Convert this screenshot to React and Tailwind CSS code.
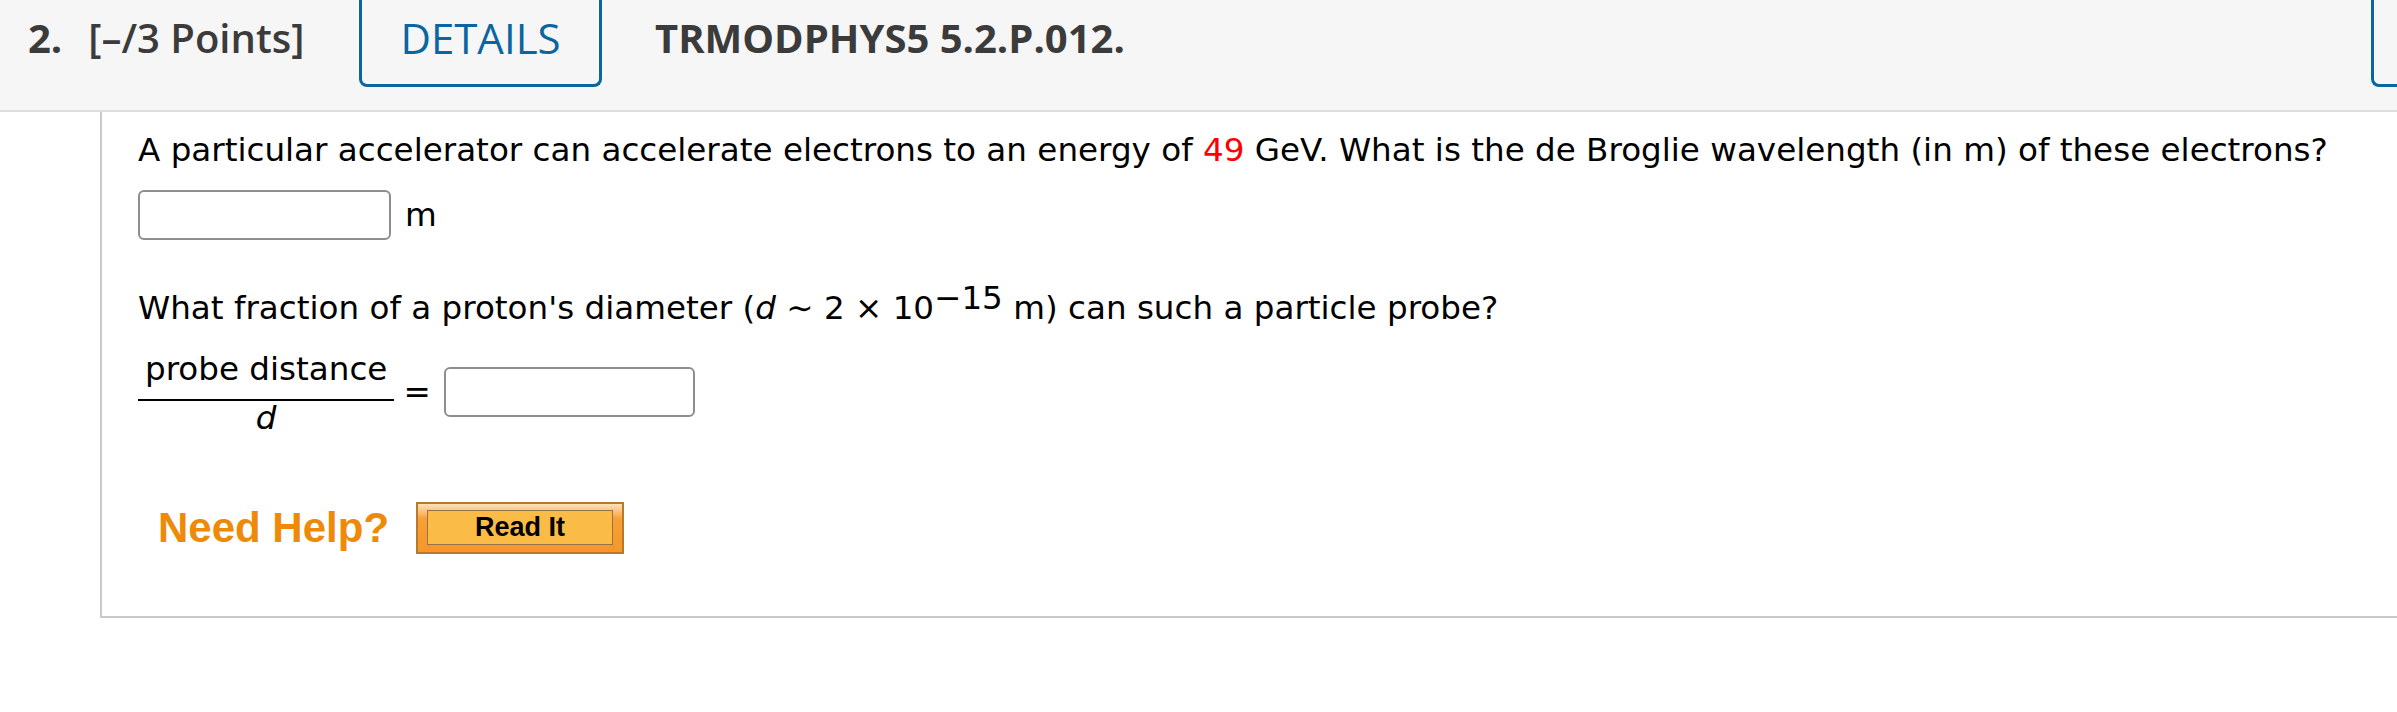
export default function App() {
  return (
    <div className="w-[2397px] h-[712px] bg-white overflow-hidden">
      {/* Header */}
      <div className="flex h-[112px] bg-[#f6f6f6] border-b-2 border-[#dddddd] font-['Open_Sans',sans-serif] text-[40px] leading-[75px] text-[#3b3b3b]">
        <div className="w-[359px] flex whitespace-nowrap">
          <span className="ml-[28px] font-bold">2.</span>
          <span className="ml-[26px] font-semibold">[–/3 Points]</span>
        </div>
        <div className="w-[243px] h-[87px] border-x-[3px] border-b-[3px] border-[#0b66a0] rounded-b-[8px] text-center text-[42px] text-[#0b65a0]">
          DETAILS
        </div>
        <div className="ml-[53px] font-bold whitespace-nowrap">TRMODPHYS5 5.2.P.012.</div>
        <div className="ml-auto w-[26px] h-[87px] border-l-[3px] border-b-[3px] rounded-bl-[8px] border-[#0b66a0]" />
      </div>

      {/* Content */}
      <div className="ml-[100px] h-[506px] border-l-2 border-b-2 border-[#c9c9c9] pl-[36px] pt-[16px] font-['DejaVu_Sans',sans-serif] text-[32.6px] leading-[44px] text-black">
        <p className="whitespace-nowrap">
          A particular accelerator can accelerate electrons to an energy of{" "}
          <span className="text-[#ff0000]">49</span> GeV. What is the de Broglie wavelength (in m) of these electrons?
        </p>
        <div className="mt-[18px] flex items-center">
          <div className="w-[253px] h-[50px] border-2 border-[#8e8e8e] rounded-[6px] bg-white" />
          <span className="ml-[14px]">m</span>
        </div>
        <p className="mt-[46px] whitespace-nowrap">
          What fraction of a proton's diameter (<i>d</i> ∼ 2 × 10
          <span className="relative -top-[10px]">−15</span> m) can such a particle probe?
        </p>
        <div className="mt-[19px] flex items-center">
          <div className="flex flex-col items-stretch">
            <div className="px-[7px] pb-[10px] leading-[40px] text-center">probe distance</div>
            <div className="h-[2px] bg-black" />
            <div className="leading-[34px] text-center italic">d</div>
          </div>
          <span className="ml-[9px]">=</span>
          <div className="ml-[13px] w-[251px] h-[50px] border-2 border-[#8e8e8e] rounded-[6px] bg-white" />
        </div>
        <div className="mt-[67px] flex items-center">
          <span className="ml-[20px] font-['Liberation_Sans',sans-serif] font-bold text-[42px] leading-[42px] text-[#ef8a08]">
            Need Help?
          </span>
          <div className="ml-[27px] w-[208px] h-[52px] border-2 border-[#b67a2e] bg-gradient-to-b from-[#fde2b8] via-[#f8a033] via-30% to-[#f7962a] px-[9px] pt-[6px] pb-[7px]">
            <div className="h-full border border-[#94744c] bg-[#fbbc47] flex items-center justify-center font-['Liberation_Sans',sans-serif] font-bold text-[27px] leading-none text-black">
              Read It
            </div>
          </div>
        </div>
      </div>
    </div>
  );
}
